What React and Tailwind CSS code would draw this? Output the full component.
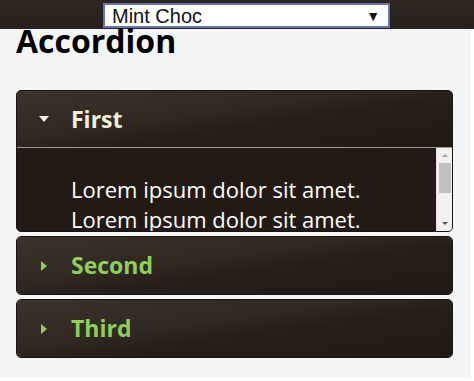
import { useState } from 'react';

const font = { fontFamily: '"Open Sans", "Noto Sans", sans-serif' };

const headerBg =
  'bg-[linear-gradient(172deg,#3d322c_0%,#312822_40%,#261e19_58%,#211914_100%)]';

function Caret({ open, green }) {
  const color = green ? '#8fce5b' : '#f2ead9';
  return open ? (
    <svg width="10" height="6" viewBox="0 0 10 6" className="shrink-0">
      <path d="M0 0h10L5 6z" fill={color} />
    </svg>
  ) : (
    <svg width="6" height="10" viewBox="0 0 6 10" className="shrink-0">
      <path d="M0 0l6 5-6 5z" fill={color} />
    </svg>
  );
}

function FakeScrollbar() {
  return (
    <div className="flex w-[16px] shrink-0 flex-col items-center border-l border-[#e4e4e4] bg-[#f1f1f1]">
      <svg width="8" height="14" viewBox="0 0 8 14">
        <path d="M1 9l3-3 3 3z" fill="#a3a3a3" />
      </svg>
      <div className="mt-[1px] h-[30px] w-[12px] bg-[#c1c1c1]" />
      <div className="flex-1" />
      <svg width="8" height="14" viewBox="0 0 8 14">
        <path d="M1 5l3 3 3-3z" fill="#505050" />
      </svg>
    </div>
  );
}

function Panel({ title, open, onToggle }) {
  return (
    <div className="overflow-hidden rounded-[5px] border border-[#1a1410] bg-[#231a15]">
      <button
        onClick={onToggle}
        className={`flex h-[57px] w-full items-center text-left ${headerBg} ${open ? 'border-b border-[#a3968a]' : ''}`}
      >
        <span className="flex w-[54px] justify-center">
          <Caret open={open} green={!open} />
        </span>
        <span
          className={`text-[23px] font-bold ${open ? 'text-[#f4ecdc]' : 'text-[#8fce5b]'}`}
        >
          {title}
        </span>
      </button>
      {open && (
        <div className="flex h-[83px] bg-[#231a15]">
          <div className="flex-1 overflow-hidden pt-[26px] pl-[54px] text-[22px] leading-[30px] text-white">
            <p className="whitespace-nowrap">Lorem ipsum dolor sit amet.</p>
            <p className="whitespace-nowrap">Lorem ipsum dolor sit amet.</p>
            <p className="whitespace-nowrap">Lorem ipsum dolor sit amet.</p>
          </div>
          <FakeScrollbar />
        </div>
      )}
    </div>
  );
}

export default function App() {
  const [open, setOpen] = useState('First');
  const items = ['First', 'Second', 'Third'];

  return (
    <div className="h-[381px] w-[474px] overflow-hidden bg-white" style={font}>
      <div className="h-[29px] bg-[linear-gradient(180deg,#2f2620_0%,#27201b_100%)] pt-[3px] pl-[103px]">
        <div
          className="flex h-[25px] w-[287px] items-center justify-between border-2 border-[#6575b2] bg-white pl-[7px] pr-[8px] text-[20px] leading-none text-[#111]"
          style={{ fontFamily: '"Liberation Sans", Arial, sans-serif' }}
        >
          <span>Mint Choc</span>
          <span className="text-[14px]">▼</span>
        </div>
      </div>
      <div className="h-[349px] w-[471px] bg-[#f3f5f7] px-[16px]">
        <h1 className="text-[32px] font-bold leading-[24px] text-black">Accordion</h1>
        <div className="mt-[37px] flex w-[437px] flex-col gap-[4px]">
          {items.map((t) => (
            <Panel
              key={t}
              title={t}
              open={open === t}
              onToggle={() => setOpen(open === t ? null : t)}
            />
          ))}
        </div>
      </div>
    </div>
  );
}
